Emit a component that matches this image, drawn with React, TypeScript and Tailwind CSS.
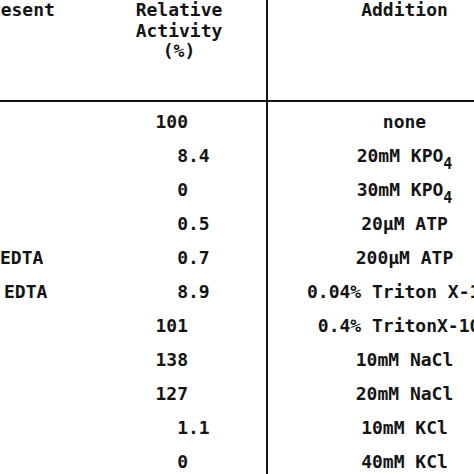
const rows: { left?: string; leftPad?: boolean; int: string; frac?: string; add: React.ReactNode }[] = [
  { int: "100", add: "none" },
  { int: "8", frac: ".4", add: <>20mM KPO<Sub>4</Sub></> },
  { int: "0", add: <>30mM KPO<Sub>4</Sub></> },
  { int: "0", frac: ".5", add: "20µM ATP" },
  { left: "EDTA", int: "0", frac: ".7", add: "200µM ATP" },
  { left: "EDTA", leftPad: true, int: "8", frac: ".9", add: "0.04% Triton X-100" },
  { int: "101", add: "0.4% TritonX-100" },
  { int: "138", add: "10mM NaCl" },
  { int: "127", add: "20mM NaCl" },
  { int: "1", frac: ".1", add: "10mM KCl" },
  { int: "0", add: "40mM KCl" },
];

function Sub({ children }: { children: React.ReactNode }) {
  return <span className="relative top-[7px] text-[15px]">{children}</span>;
}

export default function App() {
  return (
    <div
      className="w-[474px] h-[474px] overflow-hidden bg-white text-[#141414] font-bold text-[18px]"
      style={{ fontFamily: '"DejaVu Sans Mono", "Liberation Mono", monospace' }}
    >
      {/* header */}
      <div className="grid grid-cols-[92px_174px_275px] h-[100px] leading-[20.5px]">
        <div className="overflow-hidden whitespace-nowrap">
          <span className="-ml-[21px]">Present</span>
        </div>
        <div className="flex flex-col items-center">
          <span>Relative</span>
          <span>Activity</span>
          <span>(%)</span>
        </div>
        <div className="border-l-2 border-[#141414] text-center">Addition</div>
      </div>

      <div className="grid grid-cols-[92px_174px_275px]">
        <div className="col-span-2 h-[2px] bg-[#141414]" />
        <div className="h-[2px] bg-[#141414]" />
      </div>

      {/* body */}
      <div className="grid grid-cols-[92px_174px_275px]">
        <div className="h-[3px]" />
        <div className="h-[3px]" />
        <div className="h-[3px] border-l-2 border-[#141414]" />
        {rows.map((r, i) => (
          <Row key={i} {...r} />
        ))}
      </div>
    </div>
  );
}

function Row({ left, leftPad, int, frac, add }: (typeof rows)[number]) {
  return (
    <>
      <div className={"h-[34px] leading-[34px] whitespace-nowrap " + (leftPad ? "pl-[4px]" : "")}>{left}</div>
      <div className="h-[34px] leading-[34px] flex whitespace-nowrap">
        <span className="w-[96px] text-right">{int}</span>
        <span>{frac}</span>
      </div>
      <div className="h-[34px] leading-[34px] border-l-2 border-[#141414] text-center whitespace-nowrap">{add}</div>
    </>
  );
}
